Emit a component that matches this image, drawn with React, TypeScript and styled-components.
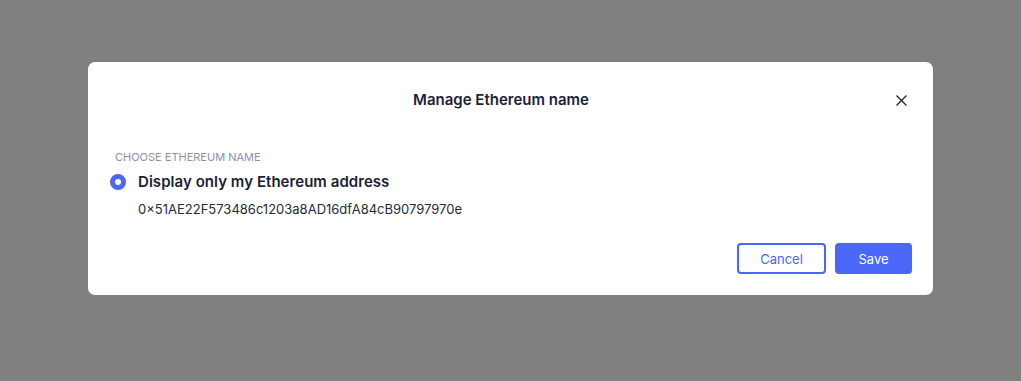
import React from 'react';
import styled, { createGlobalStyle, css } from 'styled-components';

const colors = {
  overlay: '#808080',
  white: '#ffffff',
  ink: '#1b2337',
  text: '#252b3a',
  label: '#8a93a6',
  blue: '#4a67f7',
};

const GlobalStyle = createGlobalStyle`
  * { box-sizing: border-box; }
  body {
    margin: 0;
    font-family: Inter, "Noto Sans", sans-serif;
    -webkit-font-smoothing: antialiased;
  }
`;

const Overlay = styled.div`
  display: flex;
  justify-content: center;
  align-items: flex-start;
  height: 381px;
  padding-top: 62px;
  background: ${colors.overlay};
`;

const Modal = styled.div`
  display: flex;
  flex-direction: column;
  width: 845px;
  background: ${colors.white};
  border-radius: 7px;
`;

const Header = styled.div`
  display: flex;
  align-items: center;
  height: 76px;
  padding: 0 26px 0 22px;
`;

const Title = styled.h2`
  flex: 1;
  margin: 0;
  text-align: center;
  font-size: 15px;
  font-weight: 600;
  line-height: 20px;
  color: ${colors.ink};
`;

const CloseButton = styled.button`
  display: flex;
  margin-left: 4px;
  padding: 0;
  border: 0;
  background: none;
  cursor: pointer;
  color: ${colors.ink};
`;

const Body = styled.div`
  display: flex;
  flex-direction: column;
  padding: 11px 22px 0;
`;

const SectionLabel = styled.div`
  margin-left: 5px;
  font-size: 11px;
  line-height: 16px;
  text-transform: uppercase;
  color: ${colors.label};
`;

const Option = styled.label`
  display: flex;
  align-items: center;
  gap: 12px;
  margin-top: 6px;
  cursor: pointer;
`;

const Radio = styled.span<{ checked?: boolean }>`
  width: 16px;
  height: 16px;
  border-radius: 50%;
  border: 2px solid ${colors.blue};
  background: ${colors.white};

  ${({ checked }) =>
    checked &&
    css`
      border-width: 5px;
    `}
`;

const OptionTitle = styled.span`
  font-size: 15px;
  font-weight: 600;
  line-height: 22px;
  letter-spacing: 0.05px;
  color: ${colors.ink};
`;

const Address = styled.div`
  margin: 6px 0 0 28px;
  font-size: 13px;
  line-height: 20px;
  color: ${colors.text};
`;

const Footer = styled.div`
  display: flex;
  justify-content: flex-end;
  gap: 9px;
  padding: 24px 21px 21px;
`;

const Button = styled.button<{ primary?: boolean }>`
  height: 31px;
  border-radius: 4px;
  font-family: inherit;
  font-size: 13px;
  cursor: pointer;
  border: 2px solid ${colors.blue};

  ${({ primary }) =>
    primary
      ? css`
          width: 77px;
          background: ${colors.blue};
          color: ${colors.white};
        `
      : css`
          width: 89px;
          background: ${colors.white};
          color: ${colors.blue};
        `}
`;

export default function App() {
  return (
    <>
      <GlobalStyle />
      <Overlay>
        <Modal>
          <Header>
            <Title>Manage Ethereum name</Title>
            <CloseButton aria-label="Close">
              <svg width="11" height="11" viewBox="0 0 11 11" fill="none" stroke="currentColor" strokeWidth="1.3">
                <path d="M0.5 0.5l10 10M10.5 0.5l-10 10" />
              </svg>
            </CloseButton>
          </Header>
          <Body>
            <SectionLabel>Choose Ethereum name</SectionLabel>
            <Option>
              <Radio checked />
              <OptionTitle>Display only my Ethereum address</OptionTitle>
            </Option>
            <Address>0×51AE22F573486c1203a8AD16dfA84cB90797970e</Address>
          </Body>
          <Footer>
            <Button>Cancel</Button>
            <Button primary>Save</Button>
          </Footer>
        </Modal>
      </Overlay>
    </>
  );
}
